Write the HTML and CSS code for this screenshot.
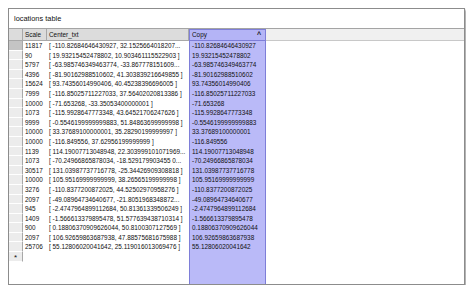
FILE: index.html
```html
<!DOCTYPE html>
<html>
<head>
<meta charset="utf-8">
<link rel="stylesheet" href="styles.css">
</head>
<body>
<div class="window">
  <div class="title">locations table</div>
  <div class="grid">
    <div class="row head">
      <div class="sel corner"></div>
      <div class="hcell">Scale</div>
      <div class="hcell">Center_txt</div>
      <div class="hcell copy-h"><span>Copy</span><span class="caret">^</span></div>
      <div class="hfill"></div>
    </div>
    <div class="row"><div class="sel active"></div><div class="c">11817</div><div class="c">[ -110.82684646430927, 32.1525664018207...</div><div class="c copy">-110.82684646430927</div><div></div></div>
    <div class="row"><div class="sel"></div><div class="c">90</div><div class="c">[ 19.93215452478802, 10.903461115522903 ]</div><div class="c copy">19.93215452478802</div><div></div></div>
    <div class="row"><div class="sel"></div><div class="c">5797</div><div class="c">[ -63.985746349463774, -33.867778151609...</div><div class="c copy">-63.985746349463774</div><div></div></div>
    <div class="row"><div class="sel"></div><div class="c">4396</div><div class="c">[ -81.90162988510602, 41.303839216649855 ]</div><div class="c copy">-81.90162988510602</div><div></div></div>
    <div class="row"><div class="sel"></div><div class="c">15624</div><div class="c">[ 93.74356014990406, 40.45238396696005 ]</div><div class="c copy">93.74356014990406</div><div></div></div>
    <div class="row"><div class="sel"></div><div class="c">7999</div><div class="c">[ -116.85025711227033, 37.56402020813386 ]</div><div class="c copy">-116.85025711227033</div><div></div></div>
    <div class="row"><div class="sel"></div><div class="c">10000</div><div class="c">[ -71.653268, -33.35053400000001 ]</div><div class="c copy">-71.653268</div><div></div></div>
    <div class="row"><div class="sel"></div><div class="c">1073</div><div class="c">[ -115.9928647773348, 43.64521706247626 ]</div><div class="c copy">-115.9928647773348</div><div></div></div>
    <div class="row"><div class="sel"></div><div class="c">9999</div><div class="c">[ -0.5546199999999883, 51.84863699999998 ]</div><div class="c copy">-0.5546199999999883</div><div></div></div>
    <div class="row"><div class="sel"></div><div class="c">10000</div><div class="c">[ 33.37689100000001, 35.28290199999997 ]</div><div class="c copy">33.37689100000001</div><div></div></div>
    <div class="row"><div class="sel"></div><div class="c">10000</div><div class="c">[ -116.849556, 37.62956199999999 ]</div><div class="c copy">-116.849556</div><div></div></div>
    <div class="row"><div class="sel"></div><div class="c">1139</div><div class="c">[ 114.19007713048948, 22.303999101071969...</div><div class="c copy">114.19007713048948</div><div></div></div>
    <div class="row"><div class="sel"></div><div class="c">1073</div><div class="c">[ -70.24966865878034, -18.529179903455 0...</div><div class="c copy">-70.24966865878034</div><div></div></div>
    <div class="row"><div class="sel"></div><div class="c">30517</div><div class="c">[ 131.03987737716778, -25.34426909308818 ]</div><div class="c copy">131.03987737716778</div><div></div></div>
    <div class="row"><div class="sel"></div><div class="c">10000</div><div class="c">[ 105.95169999999999, 38.26565199999998 ]</div><div class="c copy">105.95169999999999</div><div></div></div>
    <div class="row"><div class="sel"></div><div class="c">3276</div><div class="c">[ -110.8377200872025, 44.52502970958276 ]</div><div class="c copy">-110.8377200872025</div><div></div></div>
    <div class="row"><div class="sel"></div><div class="c">2097</div><div class="c">[ -49.08964734640677, -21.8051968348872...</div><div class="c copy">-49.08964734640677</div><div></div></div>
    <div class="row"><div class="sel"></div><div class="c">945</div><div class="c">[ -2.4747964899112684, 50.81361339506249 ]</div><div class="c copy">-2.4747964899112684</div><div></div></div>
    <div class="row"><div class="sel"></div><div class="c">1409</div><div class="c">[ -1.566613379895478, 51.577639438710314 ]</div><div class="c copy">-1.566613379895478</div><div></div></div>
    <div class="row"><div class="sel"></div><div class="c">900</div><div class="c">[ 0.18806370909626044, 50.8100307127569 ]</div><div class="c copy">0.18806370909626044</div><div></div></div>
    <div class="row"><div class="sel"></div><div class="c">2097</div><div class="c">[ 106.92659863687938, 47.88575681675988 ]</div><div class="c copy">106.92659863687938</div><div></div></div>
    <div class="row"><div class="sel"></div><div class="c">25706</div><div class="c">[ 55.12806020041642, 25.119016013069476 ]</div><div class="c copy">55.12806020041642</div><div></div></div>
    <div class="row"><div class="sel newrow">*</div><div class="c"></div><div class="c"></div><div class="c copy"></div><div></div></div>
    <div class="row filler"><div></div><div></div><div></div><div class="copy"></div><div></div></div>
  </div>
</div>
</body>
</html>
```
FILE: styles.css
```css
html, body { background: #ffffff; }
body {
  margin: 8px;
  font-family: "Liberation Sans", Arial, sans-serif;
  font-size: 6.4px;
  color: #111111;
}
.window {
  width: 455px;
  height: 275px;
  border: 1px solid #8c8c8c;
  box-shadow: 2px 2px 2px rgba(0,0,0,0.32);
  display: flex;
  flex-direction: column;
  background: #ffffff;
}
.title {
  height: 19px;
  flex: none;
  font-size: 7.4px;
  color: #111;
  padding-left: 5px;
  display: flex;
  align-items: center;
  border-bottom: 1px solid #a4a4a4;
}
.grid {
  flex: 1;
  display: flex;
  flex-direction: column;
}
.row {
  display: grid;
  grid-template-columns: 14px 24px 142px 77px 1fr;
  height: 9.6px;
  line-height: 9.6px;
  flex: none;
}
.row > div { overflow: hidden; white-space: nowrap; }
.head {
  height: 12px;
  line-height: 12px;
  background: #f0f0f0;
}
.sel {
  background: #ececec;
  border-right: 1px solid #a8a8a8;
  border-bottom: 1px solid #ffffff;
  box-sizing: border-box;
}
.corner { background: #dcdcdc; border-bottom: 1px solid #a8a8a8; }
.sel.active { background: #c4c4c4; }
.newrow { text-align: center; font-size: 8px; line-height: 11px; }
.hcell {
  background: #dcdcdc;
  border-right: 1px solid #a8a8a8;
  border-bottom: 1px solid #a8a8a8;
  padding-left: 2px;
  box-sizing: border-box;
}
.hfill { border-bottom: 1px solid #c8c8c8; box-sizing: border-box; }
.copy-h {
  background: #b4b4f6;
  border: 1px solid #7e7ed8;
  display: flex;
  justify-content: space-between;
  padding-right: 4px;
  line-height: 10px;
}
.caret { font-size: 7px; font-weight: bold; }
.c { padding-left: 2px; }
.copy {
  background: #babaf8;
  border-left: 1px solid #7e7ed8;
  border-right: 1px solid #7e7ed8;
  box-sizing: border-box;
}
.filler { flex: 1; height: auto; }
```
